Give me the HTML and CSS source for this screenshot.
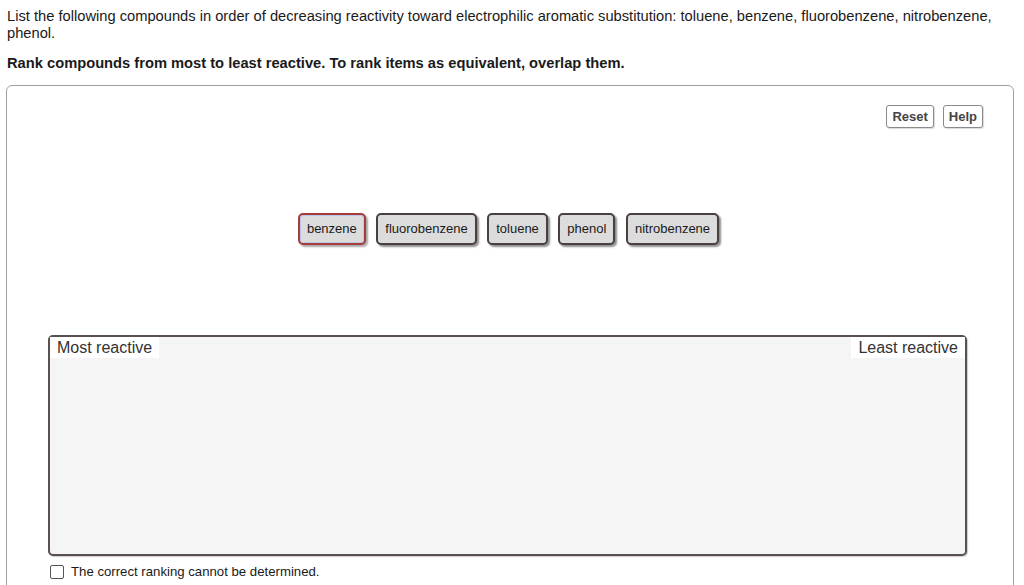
FILE: index.html
```html
<!DOCTYPE html>
<html lang="en">
<head>
<meta charset="utf-8">
<title>Ranking</title>
<link rel="stylesheet" href="styles.css">
</head>
<body>
<div class="page">
  <p class="prompt">List the following compounds in order of decreasing reactivity toward electrophilic aromatic substitution: toluene, benzene, fluorobenzene, nitrobenzene, phenol.</p>
  <p class="instr">Rank compounds from most to least reactive. To rank items as equivalent, overlap them.</p>
  <div class="panel">
    <div class="toolbar">
      <button class="tool">Reset</button>
      <button class="tool">Help</button>
    </div>
    <div class="chips">
      <div class="chip selected">benzene</div>
      <div class="chip">fluorobenzene</div>
      <div class="chip">toluene</div>
      <div class="chip">phenol</div>
      <div class="chip">nitrobenzene</div>
    </div>
    <div class="rankbox">
      <span class="label">Most reactive</span>
      <span class="label">Least reactive</span>
    </div>
    <label class="check"><span class="box"></span>The correct ranking cannot be determined.</label>
  </div>
</div>
</body>
</html>
```
FILE: styles.css
```css
html, body {
  margin: 0;
  padding: 0;
  background: #fff;
  overflow: hidden;
}

.page {
  font-family: "Liberation Sans", Arial, sans-serif;
  color: #1a1a1a;
  padding: 8px 0 0 6px;
}

.prompt {
  margin: 0 0 0 1px;
  font-size: 14.7px;
  line-height: 17px;
  width: 1000px;
}

.instr {
  margin: 13px 0 0 1px;
  font-size: 14.7px;
  line-height: 17px;
  font-weight: bold;
}

.panel {
  margin-top: 13px;
  width: 1006px;
  height: 520px;
  border: 1px solid #a0a0a0;
  border-radius: 6px;
  display: flex;
  flex-direction: column;
}

.toolbar {
  display: flex;
  justify-content: flex-end;
  gap: 9px;
  padding: 19px 30px 0 0;
}

.tool {
  font-family: "Liberation Sans", Arial, sans-serif;
  font-size: 13px;
  font-weight: bold;
  color: #444;
  background: #fff;
  border: 1px solid #8a8a8a;
  border-radius: 3px;
  height: 23px;
  padding: 0 5px;
  box-shadow: 1px 1px 1px rgba(0,0,0,0.15);
}

.chips {
  display: flex;
  justify-content: center;
  gap: 10.5px;
  margin-top: 85px;
  padding-right: 3px;
}

.chip {
  font-size: 13px;
  color: #1a1a1a;
  background: #dcdcdc;
  border: 2px solid #4a4040;
  border-radius: 5px;
  height: 28px;
  line-height: 28px;
  padding: 0 7px;
  box-shadow: 2px 2px 2px rgba(0,0,0,0.45);
}

.chip.selected {
  border-color: #a83c3c;
  box-shadow: inset 0 0 0 1px #b8c8e8, 2px 2px 2px rgba(0,0,0,0.35);
}

.rankbox {
  margin: 90px 0 0 41px;
  width: 915px;
  height: 217px;
  border: 2px solid #5a5050;
  border-radius: 5px;
  background: #f5f5f5;
  display: flex;
  justify-content: space-between;
  align-items: flex-start;
  box-shadow: 1px 1px 1px rgba(0,0,0,0.2);
}

.label {
  background: #fff;
  font-size: 16px;
  color: #333;
  line-height: 21px;
  padding: 0 7px;
}

.check {
  display: flex;
  align-items: center;
  gap: 7px;
  margin: 8px 0 0 43px;
  font-size: 13.2px;
  color: #1a1a1a;
}

.box {
  width: 12px;
  height: 12px;
  border: 1px solid #555;
  border-radius: 2px;
  background: #fff;
}
```
